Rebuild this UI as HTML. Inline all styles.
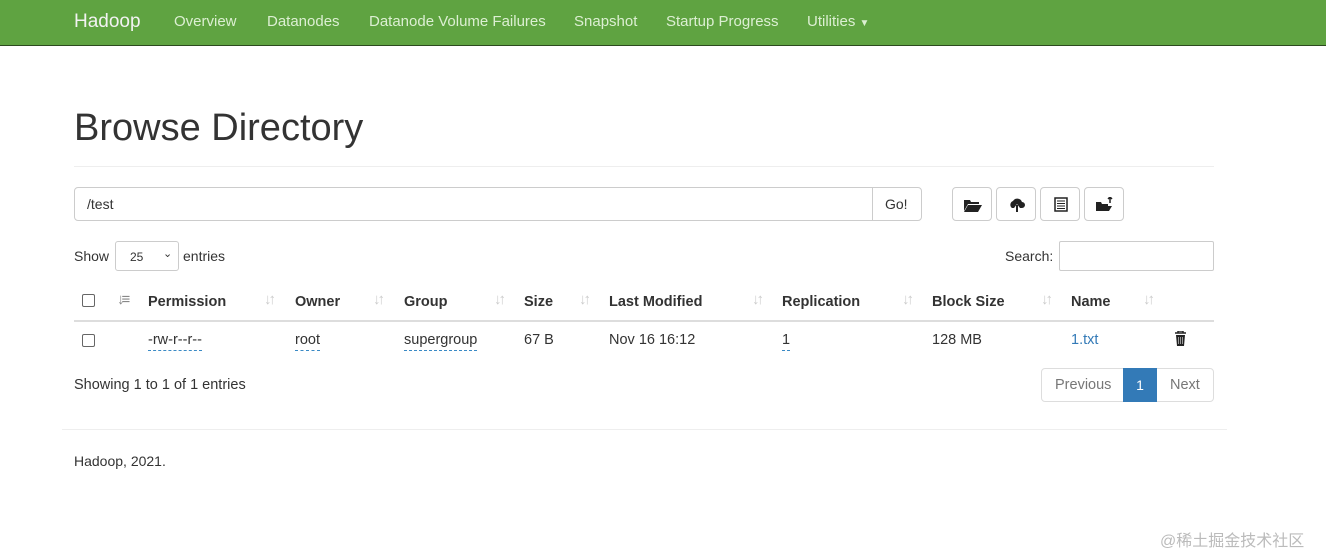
<!DOCTYPE html>
<html><head><meta charset="utf-8"><style>
*{box-sizing:border-box;margin:0;padding:0}
body{width:1326px;height:552px;position:relative;background:#fff;font-family:"Liberation Sans",sans-serif;font-size:14px;color:#333;overflow:hidden}
.a{position:absolute;white-space:nowrap}
.nav{position:absolute;left:0;top:0;width:1326px;height:46px;background:#5fa341;border-bottom:1px solid #2c4a1e}
.nav span{position:absolute;top:13px;color:#dcefd2;font-size:15px}
.box{position:absolute;border:1px solid #ccc;border-radius:4px;background:#fff}
.th{position:absolute;top:294px;font-weight:bold;font-size:14.5px}
.sort{position:absolute;top:291px;color:#ccc;font-size:15px;letter-spacing:-3px;font-weight:bold}
.td{position:absolute;top:332px;font-size:14.5px}
.dot{border-bottom:1px dashed #3a8ac5;padding-bottom:2px}
.cb{position:absolute;width:13px;height:13px;border:1px solid #666;border-radius:2px}
</style></head><body>
<div class="nav">
<span style="left:74px;top:11px;font-size:19px;color:#f2f2f2">Hadoop</span>
<span style="left:174px">Overview</span>
<span style="left:267px">Datanodes</span>
<span style="left:369px">Datanode Volume Failures</span>
<span style="left:574px">Snapshot</span>
<span style="left:666px">Startup Progress</span>
<span style="left:807px">Utilities <span style="position:static;font-size:10px">▼</span></span>
</div>
<div class="a" style="left:74px;top:107px;font-size:38px;font-weight:400;color:#333">Browse Directory</div>
<div class="a" style="left:74px;top:166px;width:1140px;border-top:1px solid #eee"></div>
<div class="box" style="left:74px;top:187px;width:799px;height:34px;border-radius:4px 0 0 4px"><span class="a" style="left:12px;top:8px">/test</span></div>
<div class="box" style="left:872px;top:187px;width:50px;height:34px;border-radius:0 4px 4px 0"><span class="a" style="left:12px;top:8px">Go!</span></div>
<div class="box" style="left:952px;top:187px;width:40px;height:34px"><svg class="a" style="left:11px;top:10px" width="18" height="14"><path d="M0 2h6l1 2h8v2H4L0 13zM4 7h14l-4 7H0z" fill="#222"/></svg></div>
<div class="box" style="left:996px;top:187px;width:40px;height:34px"><svg class="a" style="left:11px;top:9px" width="18" height="16"><path d="M4 11a4 4 0 0 1 1-7 5 5 0 0 1 9 1 3 3 0 0 1 0 6h-2l-3-4-3 4z" fill="#222"/><path d="M9 8v7" stroke="#222" stroke-width="2"/></svg></div>
<div class="box" style="left:1040px;top:187px;width:40px;height:34px"><svg class="a" style="left:13px;top:9px" width="14" height="15"><rect x="1" y="1" width="12" height="13" fill="none" stroke="#222" stroke-width="1.5"/><path d="M3 4h8M3 6.5h8M3 9h8M3 11.5h8" stroke="#222"/></svg></div>
<div class="box" style="left:1084px;top:187px;width:40px;height:34px"><svg class="a" style="left:11px;top:9px" width="18" height="15"><path d="M0 5h5l1 2h6v2H4L0 14zM4 9h12l-3 5H0z" fill="#222"/><path d="M14 0v6M12 2l2-2 2 2" stroke="#222" fill="none" stroke-width="1.5"/></svg></div>
<div class="a" style="left:74px;top:248px">Show</div>
<div class="box" style="left:115px;top:241px;width:64px;height:30px;border-radius:3px"><span class="a" style="left:14px;top:8px;font-size:12px">25</span><span class="a" style="left:47px;top:5px;font-size:11px">⌄</span></div>
<div class="a" style="left:183px;top:248px">entries</div>
<div class="a" style="left:1005px;top:248px">Search:</div>
<div class="box" style="left:1059px;top:241px;width:155px;height:30px;border-radius:2px"></div>
<div class="cb" style="left:82px;top:294px"></div>
<div class="sort" style="left:117px;color:#888">↓≡</div>
<div class="th" style="left:148px">Permission</div><div class="sort" style="left:264px">↓↑</div>
<div class="th" style="left:295px">Owner</div><div class="sort" style="left:373px">↓↑</div>
<div class="th" style="left:404px">Group</div><div class="sort" style="left:494px">↓↑</div>
<div class="th" style="left:524px">Size</div><div class="sort" style="left:579px">↓↑</div>
<div class="th" style="left:609px">Last Modified</div><div class="sort" style="left:752px">↓↑</div>
<div class="th" style="left:782px">Replication</div><div class="sort" style="left:902px">↓↑</div>
<div class="th" style="left:932px">Block Size</div><div class="sort" style="left:1041px">↓↑</div>
<div class="th" style="left:1071px">Name</div><div class="sort" style="left:1143px">↓↑</div>
<div class="a" style="left:74px;top:320px;width:1140px;border-top:2px solid #ddd"></div>
<div class="cb" style="left:82px;top:334px"></div>
<div class="td dot" style="left:148px">-rw-r--r--</div>
<div class="td dot" style="left:295px">root</div>
<div class="td dot" style="left:404px">supergroup</div>
<div class="td" style="left:524px">67 B</div>
<div class="td" style="left:609px">Nov 16 16:12</div>
<div class="td dot" style="left:782px">1</div>
<div class="td" style="left:932px">128 MB</div>
<div class="td" style="left:1071px;color:#337ab7">1.txt</div>
<svg class="a" style="left:1174px;top:331px" width="13" height="15"><path d="M1 2h11M4 2V0h5v2" stroke="#222" stroke-width="1.5" fill="none"/><path d="M2 4h9l-1 11H3z" fill="#222"/><path d="M4.5 6v7M6.5 6v7M8.5 6v7" stroke="#999"/></svg>
<div class="a" style="left:74px;top:377px;font-size:14.5px">Showing 1 to 1 of 1 entries</div>
<div class="box" style="left:1041px;top:368px;width:173px;height:34px;border-color:#ddd"></div>
<div class="a" style="left:1055px;top:377px;color:#777;font-size:14.5px">Previous</div>
<div class="a" style="left:1123px;top:368px;width:34px;height:34px;background:#337ab7;color:#fff;text-align:center;line-height:34px">1</div>
<div class="a" style="left:1170px;top:377px;color:#777;font-size:14.5px">Next</div>
<div class="a" style="left:62px;top:429px;width:1165px;border-top:1px solid #eee"></div>
<div class="a" style="left:74px;top:453px">Hadoop, 2021.</div>
<div class="a" style="left:1160px;top:527px;color:#bbb;font-size:16px;font-family:'Liberation Sans','Noto Sans CJK SC',sans-serif">@稀土掘金技术社区</div>
</body></html>
